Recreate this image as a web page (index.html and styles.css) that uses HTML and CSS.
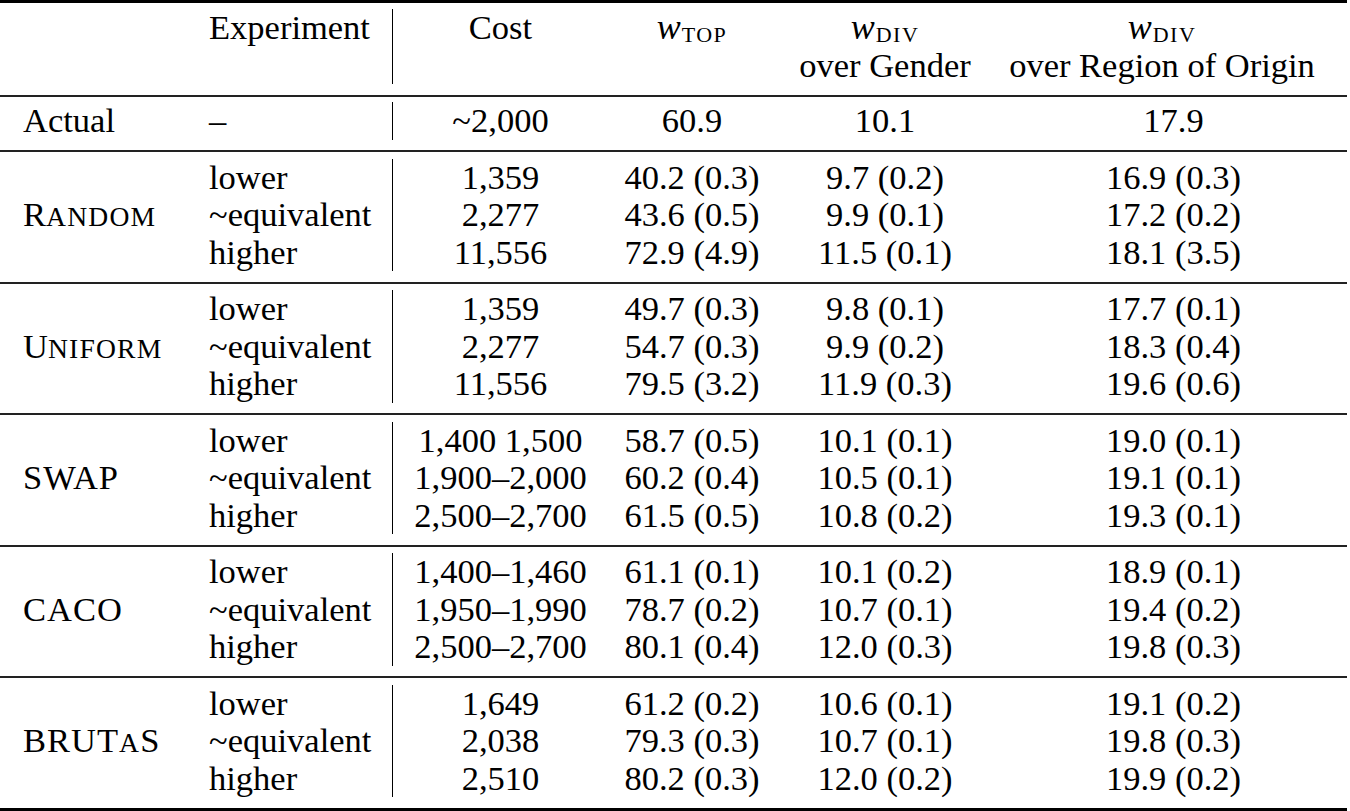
FILE: index.html
```html
<!DOCTYPE html>
<html lang="en">
<head>
<meta charset="utf-8">
<title>Results table</title>
<link rel="stylesheet" href="styles.css">
</head>
<body>
<div class="table">
  <div class="rule top"></div>

  <div class="sec head">
    <div class="lab"></div>
    <div class="exp">Experiment</div>
    <div class="num cost">Cost</div>
    <div class="num"><span class="wvar"><i class="w">w</i><span class="sub">TOP</span></span></div>
    <div class="num"><span class="wvar"><i class="w">w</i><span class="sub">DIV</span></span></div>
    <div class="num reg-h"><span class="wvar"><i class="w">w</i><span class="sub">DIV</span></span></div>
    <div class="lab"></div>
    <div class="exp"></div>
    <div class="num cost"></div>
    <div class="num"></div>
    <div class="num">over Gender</div>
    <div class="num reg-h">over Region of Origin</div>
  </div>

  <div class="rule mid"></div>

  <div class="sec actual">
    <div class="lab">Actual</div>
    <div class="exp">–</div>
    <div class="num cost">~2,000</div>
    <div class="num">60.9</div>
    <div class="num">10.1</div>
    <div class="num reg">17.9</div>
  </div>

  <div class="rule mid"></div>

  <div class="sec group">
    <div class="lab"></div>
    <div class="exp">lower</div>
    <div class="num cost">1,359</div>
    <div class="num">40.2 (0.3)</div>
    <div class="num">9.7 (0.2)</div>
    <div class="num reg">16.9 (0.3)</div>
    <div class="lab">R<span class="smc">ANDOM</span></div>
    <div class="exp">~equivalent</div>
    <div class="num cost">2,277</div>
    <div class="num">43.6 (0.5)</div>
    <div class="num">9.9 (0.1)</div>
    <div class="num reg">17.2 (0.2)</div>
    <div class="lab"></div>
    <div class="exp">higher</div>
    <div class="num cost">11,556</div>
    <div class="num">72.9 (4.9)</div>
    <div class="num">11.5 (0.1)</div>
    <div class="num reg">18.1 (3.5)</div>
  </div>

  <div class="rule mid"></div>

  <div class="sec group">
    <div class="lab"></div>
    <div class="exp">lower</div>
    <div class="num cost">1,359</div>
    <div class="num">49.7 (0.3)</div>
    <div class="num">9.8 (0.1)</div>
    <div class="num reg">17.7 (0.1)</div>
    <div class="lab">U<span class="smc">NIFORM</span></div>
    <div class="exp">~equivalent</div>
    <div class="num cost">2,277</div>
    <div class="num">54.7 (0.3)</div>
    <div class="num">9.9 (0.2)</div>
    <div class="num reg">18.3 (0.4)</div>
    <div class="lab"></div>
    <div class="exp">higher</div>
    <div class="num cost">11,556</div>
    <div class="num">79.5 (3.2)</div>
    <div class="num">11.9 (0.3)</div>
    <div class="num reg">19.6 (0.6)</div>
  </div>

  <div class="rule mid"></div>

  <div class="sec group">
    <div class="lab"></div>
    <div class="exp">lower</div>
    <div class="num cost">1,400 1,500</div>
    <div class="num">58.7 (0.5)</div>
    <div class="num">10.1 (0.1)</div>
    <div class="num reg">19.0 (0.1)</div>
    <div class="lab caps">SWAP</div>
    <div class="exp">~equivalent</div>
    <div class="num cost">1,900–2,000</div>
    <div class="num">60.2 (0.4)</div>
    <div class="num">10.5 (0.1)</div>
    <div class="num reg">19.1 (0.1)</div>
    <div class="lab"></div>
    <div class="exp">higher</div>
    <div class="num cost">2,500–2,700</div>
    <div class="num">61.5 (0.5)</div>
    <div class="num">10.8 (0.2)</div>
    <div class="num reg">19.3 (0.1)</div>
  </div>

  <div class="rule mid"></div>

  <div class="sec group">
    <div class="lab"></div>
    <div class="exp">lower</div>
    <div class="num cost">1,400–1,460</div>
    <div class="num">61.1 (0.1)</div>
    <div class="num">10.1 (0.2)</div>
    <div class="num reg">18.9 (0.1)</div>
    <div class="lab caps">CACO</div>
    <div class="exp">~equivalent</div>
    <div class="num cost">1,950–1,990</div>
    <div class="num">78.7 (0.2)</div>
    <div class="num">10.7 (0.1)</div>
    <div class="num reg">19.4 (0.2)</div>
    <div class="lab"></div>
    <div class="exp">higher</div>
    <div class="num cost">2,500–2,700</div>
    <div class="num">80.1 (0.4)</div>
    <div class="num">12.0 (0.3)</div>
    <div class="num reg">19.8 (0.3)</div>
  </div>

  <div class="rule mid"></div>

  <div class="sec group">
    <div class="lab"></div>
    <div class="exp">lower</div>
    <div class="num cost">1,649</div>
    <div class="num">61.2 (0.2)</div>
    <div class="num">10.6 (0.1)</div>
    <div class="num reg">19.1 (0.2)</div>
    <div class="lab caps">BRUT<span class="smc">A</span>S</div>
    <div class="exp">~equivalent</div>
    <div class="num cost">2,038</div>
    <div class="num">79.3 (0.3)</div>
    <div class="num">10.7 (0.1)</div>
    <div class="num reg">19.8 (0.3)</div>
    <div class="lab"></div>
    <div class="exp">higher</div>
    <div class="num cost">2,510</div>
    <div class="num">80.2 (0.3)</div>
    <div class="num">12.0 (0.2)</div>
    <div class="num reg">19.9 (0.2)</div>
  </div>

  <div class="rule bottom"></div>
</div>
</body>
</html>
```

FILE: styles.css
```css
html, body {
  margin: 0;
  padding: 0;
  background: #ffffff;
}

body {
  color: #000000;
  font-family: "Liberation Serif", "Times New Roman", serif;
  font-size: 34.5px;
}

.table {
  width: 1347px;
}

.rule.top {
  height: 3px;
  background: #000000;
}

.rule.mid {
  height: 2px;
  background: #222222;
}

.rule.bottom {
  height: 3px;
  background: #000000;
}

.sec {
  display: grid;
  grid-template-columns: 209px 183px 216px 168px 218px 353px;
  grid-auto-rows: 37.5px;
  line-height: 37.5px;
}

.sec.head {
  padding: 6px 0 11px;
}

.sec.actual {
  padding: 5px 0 10.5px;
}

.sec.group {
  padding: 6.5px 0 10.5px;
}

.lab {
  padding-left: 23px;
  white-space: nowrap;
}

.caps {
  letter-spacing: 1px;
}

.smc {
  font-size: 0.8em;
  line-height: 1;
  letter-spacing: 1.2px;
}

.exp {
  white-space: nowrap;
}

.num {
  text-align: center;
  white-space: nowrap;
}

.cost {
  border-left: 1px solid #000000;
}

.reg-h {
  padding-right: 17px;
}

.reg {
  padding-left: 6px;
}

.wvar {
  display: inline-block;
  line-height: 1;
  vertical-align: 3px;
}

.w {
  font-style: italic;
  font-size: 36px;
}

.sub {
  font-size: 22px;
  line-height: 1;
  letter-spacing: 1.5px;
  vertical-align: -3px;
  margin-left: 1px;
}
```
